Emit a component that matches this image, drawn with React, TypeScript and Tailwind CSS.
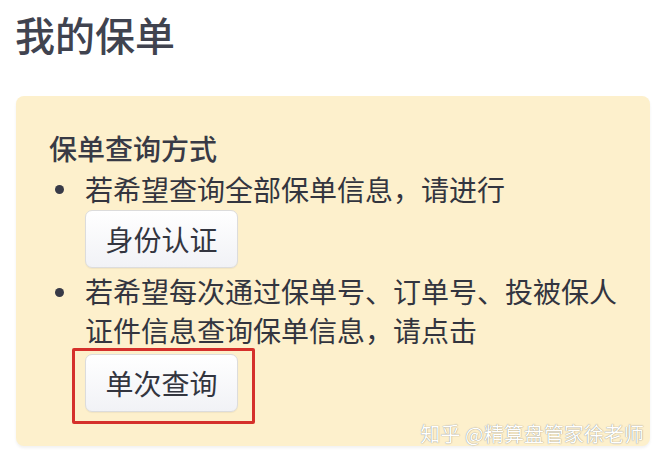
import React from "react";

const font = { fontFamily: '"Noto Sans CJK SC", "Noto Sans", sans-serif' };

export default function App() {
  return (
    <div
      className="w-[660px] h-[463px] bg-white overflow-hidden font-['Noto_Sans_CJK_SC',sans-serif]"
      style={font}
    >
      <div className="pl-[15px] pt-[12px] h-[96px]">
        <h1 className="text-[40px] leading-[44px] text-[#40434f] font-medium">我的保单</h1>
      </div>
      <div className="relative ml-[16px] w-[634px] h-[350px] rounded-[8px] bg-[#fdf0cc] shadow-[0_2px_3px_rgba(0,0,0,0.06)] pt-[32px] pl-[33px] text-[#33353f]">
        <div className="text-[28px] leading-[40px] font-medium text-[#383a45]">保单查询方式</div>
        <div className="ml-[6px] mt-[1px]">
          <div className="flex items-start">
            <span className="mt-[16px] w-[9px] h-[9px] rounded-full bg-[#383a47] shrink-0" />
            <span className="ml-[21px] text-[28px] leading-[40px]">若希望查询全部保单信息，请进行</span>
          </div>
          <div className="ml-[30px] mt-[1px] w-[153px] h-[58px] rounded-[7px] border border-[#dcdcdc] bg-gradient-to-b from-[#ffffff] to-[#f1f2f6] flex items-center justify-center text-[28px] leading-[40px] text-[#33353f] shadow-[0_1px_1px_rgba(0,0,0,0.05)]">
            身份认证
          </div>
          <div className="flex items-start mt-[4px]">
            <span className="mt-[16px] w-[9px] h-[9px] rounded-full bg-[#383a47] shrink-0" />
            <span className="ml-[21px] text-[28px] leading-[39px] w-[540px]">
              若希望每次通过保单号、订单号、投被保人
              <br />
              证件信息查询保单信息，请点击
            </span>
          </div>
          <div className="ml-[17px] mt-[-2px] w-[183px] h-[76px] border-[3px] border-[#d5302b] rounded-[2px] pl-[10px] pt-[3px]">
            <div className="w-[153px] h-[58px] rounded-[7px] border border-[#dcdcdc] bg-gradient-to-b from-[#ffffff] to-[#f1f2f6] flex items-center justify-center text-[28px] leading-[40px] text-[#33353f] shadow-[0_1px_1px_rgba(0,0,0,0.05)]">
              单次查询
            </div>
          </div>
        </div>
        <div className="absolute right-[6px] bottom-[-2px] text-[20px] leading-[28px] text-white [text-shadow:0_0_1px_rgba(90,90,90,0.9)]">
          知乎 @精算盘管家徐老师
        </div>
      </div>
    </div>
  );
}
